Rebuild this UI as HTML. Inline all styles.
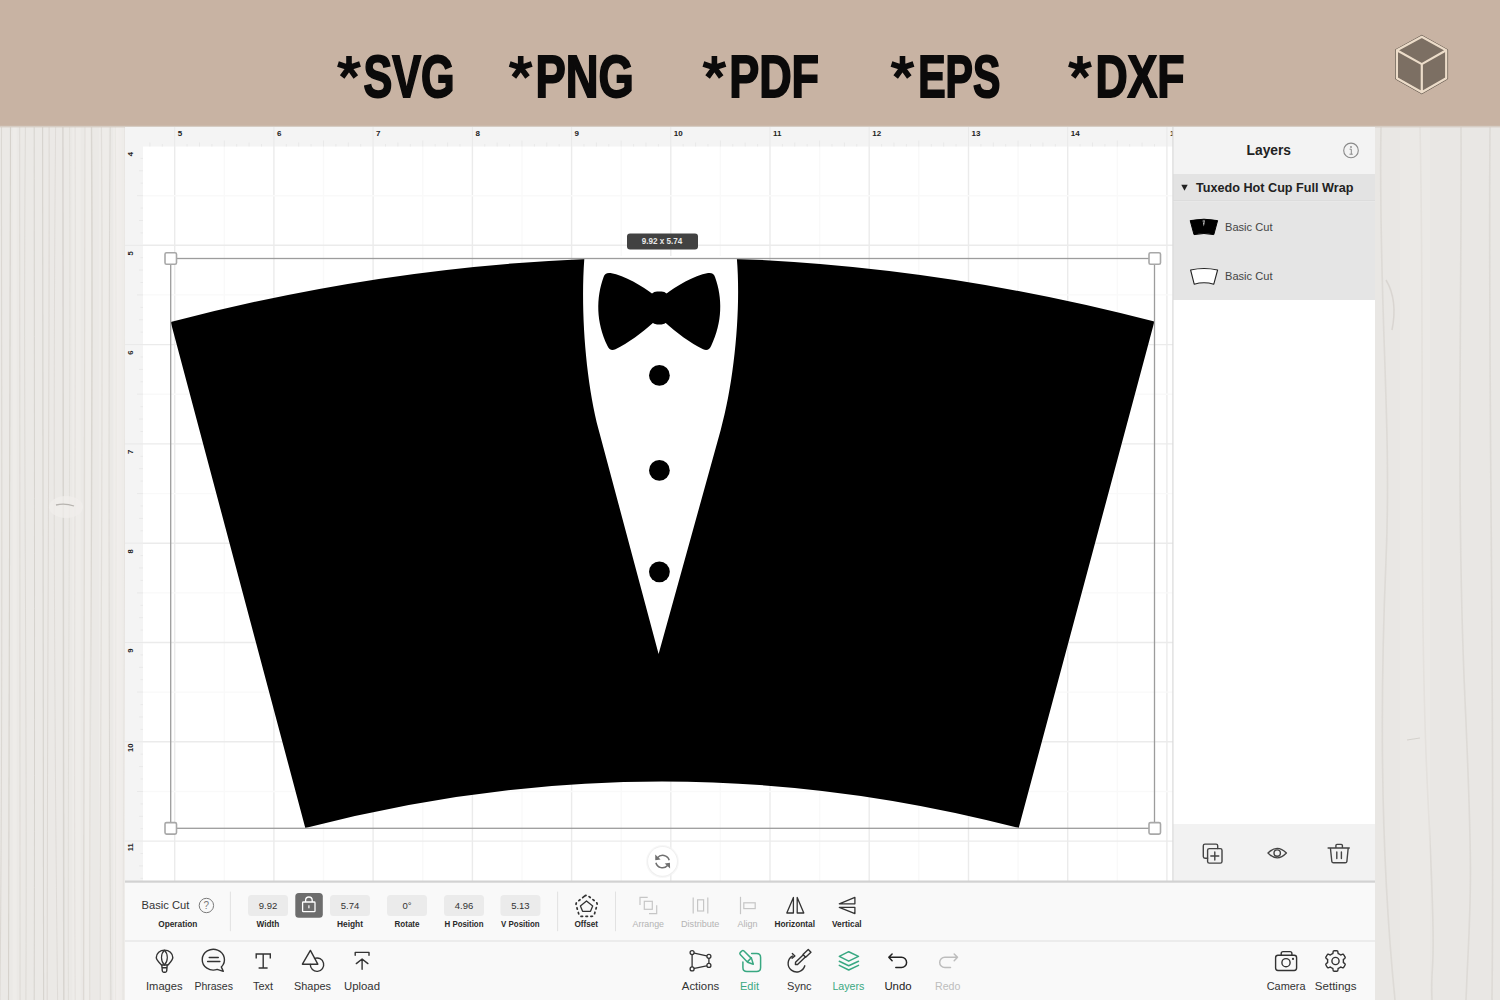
<!DOCTYPE html>
<html><head><meta charset="utf-8">
<style>
html,body{margin:0;padding:0;width:1500px;height:1000px;overflow:hidden;}
body{position:relative;background:#e4e1dd;font-family:"Liberation Sans",sans-serif;}
svg{position:absolute;left:0;top:0;}
</style></head>
<body>
<svg width="1500" height="1000" viewBox="0 0 1500 1000">
<rect x="0" y="127" width="125.5" height="873" fill="#ebe9e6"/>
<rect x="1375" y="127" width="125" height="873" fill="#e9e7e4"/>
<path d="M1.5 127 C1.3 400 3.3 700 -0.1 1000" stroke="#d4d0ca" stroke-width="1.06" opacity="0.70" fill="none"/>
<path d="M10.5 127 C8.5 400 9.5 700 8.5 1000" stroke="#cdc9c3" stroke-width="1.08" opacity="0.73" fill="none"/>
<path d="M19.6 127 C21.9 400 20.3 700 20.1 1000" stroke="#d4d0ca" stroke-width="1.25" opacity="0.47" fill="none"/>
<path d="M25.4 127 C23.0 400 27.3 700 25.9 1000" stroke="#cdc9c3" stroke-width="0.71" opacity="0.69" fill="none"/>
<path d="M34.2 127 C34.3 400 34.9 700 34.2 1000" stroke="#cdc9c3" stroke-width="0.96" opacity="0.72" fill="none"/>
<path d="M42.6 127 C45.0 400 44.3 700 43.6 1000" stroke="#c6c2bc" stroke-width="1.07" opacity="0.58" fill="none"/>
<path d="M49.1 127 C49.5 400 47.2 700 47.2 1000" stroke="#cdc9c3" stroke-width="0.88" opacity="0.58" fill="none"/>
<path d="M55.6 127 C53.1 400 54.1 700 57.6 1000" stroke="#c6c2bc" stroke-width="0.75" opacity="0.46" fill="none"/>
<path d="M62.9 127 C63.3 400 61.4 700 63.8 1000" stroke="#cdc9c3" stroke-width="1.48" opacity="0.63" fill="none"/>
<path d="M69.6 127 C70.9 400 67.7 700 68.4 1000" stroke="#d4d0ca" stroke-width="0.95" opacity="0.46" fill="none"/>
<path d="M75.1 127 C76.0 400 73.6 700 75.2 1000" stroke="#cdc9c3" stroke-width="0.75" opacity="0.81" fill="none"/>
<path d="M85.1 127 C83.1 400 84.7 700 83.6 1000" stroke="#d4d0ca" stroke-width="1.32" opacity="0.64" fill="none"/>
<path d="M91.4 127 C93.9 400 89.0 700 89.8 1000" stroke="#d4d0ca" stroke-width="1.48" opacity="0.81" fill="none"/>
<path d="M101.4 127 C103.8 400 99.9 700 100.2 1000" stroke="#cdc9c3" stroke-width="1.18" opacity="0.71" fill="none"/>
<path d="M110.2 127 C108.1 400 108.8 700 110.9 1000" stroke="#cdc9c3" stroke-width="0.96" opacity="0.58" fill="none"/>
<path d="M115.3 127 C117.6 400 115.2 700 115.7 1000" stroke="#cdc9c3" stroke-width="0.99" opacity="0.73" fill="none"/>
<path d="M124.7 127 C126.2 400 123.4 700 123.1 1000" stroke="#cdc9c3" stroke-width="0.85" opacity="0.52" fill="none"/>
<rect x="112.8" y="127" width="6.0" height="873" fill="#f3f1ee" opacity="0.4"/>
<rect x="114.0" y="127" width="12.8" height="873" fill="#f3f1ee" opacity="0.4"/>
<rect x="72.4" y="127" width="8.2" height="873" fill="#f3f1ee" opacity="0.4"/>
<rect x="12.5" y="127" width="4.4" height="873" fill="#f3f1ee" opacity="0.4"/>
<rect x="115.5" y="127" width="6.4" height="873" fill="#f3f1ee" opacity="0.4"/>
<rect x="84.5" y="127" width="6.6" height="873" fill="#f3f1ee" opacity="0.4"/>
<rect x="98.8" y="127" width="10.0" height="873" fill="#f3f1ee" opacity="0.4"/>
<ellipse cx="66" cy="507" rx="17" ry="11" fill="#f0eeeb" opacity="0.75"/><path d="M56 505 Q65 503 74 506" stroke="#a9a5a0" stroke-width="1.3" fill="none" opacity="0.8"/>
<path d="M1381 127 C1378 300 1392 420 1386 560 S1380 850 1395 1000" stroke="#d4d0ca" stroke-width="1.6" opacity="0.55" fill="none"/>
<path d="M1461 127 C1462 300 1456 500 1465 700 S1470 900 1466 1000" stroke="#d4d0ca" stroke-width="1.6" opacity="0.55" fill="none"/>
<path d="M1420 127 C1425 350 1418 600 1428 800 S1430 950 1432 1000" stroke="#d4d0ca" stroke-width="1.6" opacity="0.55" fill="none"/>
<path d="M1490 127 C1488 400 1495 700 1492 1000" stroke="#d4d0ca" stroke-width="1.6" opacity="0.55" fill="none"/>
<path d="M1386 280 Q1398 300 1392 330" stroke="#cfcac4" stroke-width="1.5" opacity="0.6" fill="none"/>
<path d="M1407 740 L1420 738" stroke="#b8b3ad" stroke-width="1.2" opacity="0.7" fill="none"/>
<rect x="1400" y="127" width="30" height="873" fill="#f1efec" opacity="0.35"/>

<rect x="0" y="0" width="1500" height="126" fill="#c8b3a3"/><rect x="0" y="125.8" width="1500" height="1.6" fill="#d6cdc4"/>
<text transform="translate(363.41,96.50) scale(0.7364,1)" x="0" y="0" font-family="Liberation Sans" font-weight="bold" font-size="58.55" fill="#0b0a0a" stroke="#0b0a0a" stroke-width="1.90" stroke-linejoin="miter">SVG</text>
<text transform="translate(535.52,96.50) scale(0.7753,1)" x="0" y="0" font-family="Liberation Sans" font-weight="bold" font-size="58.55" fill="#0b0a0a" stroke="#0b0a0a" stroke-width="1.81" stroke-linejoin="miter">PNG</text>
<text transform="translate(729.15,96.50) scale(0.7681,1)" x="0" y="0" font-family="Liberation Sans" font-weight="bold" font-size="58.55" fill="#0b0a0a" stroke="#0b0a0a" stroke-width="1.82" stroke-linejoin="miter">PDF</text>
<text transform="translate(918.23,96.50) scale(0.7003,1)" x="0" y="0" font-family="Liberation Sans" font-weight="bold" font-size="58.55" fill="#0b0a0a" stroke="#0b0a0a" stroke-width="2.00" stroke-linejoin="miter">EPS</text>
<text transform="translate(1095.38,96.50) scale(0.7618,1)" x="0" y="0" font-family="Liberation Sans" font-weight="bold" font-size="58.55" fill="#0b0a0a" stroke="#0b0a0a" stroke-width="1.84" stroke-linejoin="miter">DXF</text>
<path d="M349.00 67.60 L349.00 56.00 M349.00 67.60 L360.03 64.02 M349.00 67.60 L337.97 64.02 M349.00 67.60 L355.82 76.98 M349.00 67.60 L342.18 76.98 " stroke="#0b0a0a" stroke-width="5.6" stroke-linecap="butt" fill="none"/>
<path d="M520.70 67.60 L520.70 56.00 M520.70 67.60 L531.73 64.02 M520.70 67.60 L509.67 64.02 M520.70 67.60 L527.52 76.98 M520.70 67.60 L513.88 76.98 " stroke="#0b0a0a" stroke-width="5.6" stroke-linecap="butt" fill="none"/>
<path d="M714.40 67.60 L714.40 56.00 M714.40 67.60 L725.43 64.02 M714.40 67.60 L703.37 64.02 M714.40 67.60 L721.22 76.98 M714.40 67.60 L707.58 76.98 " stroke="#0b0a0a" stroke-width="5.6" stroke-linecap="butt" fill="none"/>
<path d="M902.50 67.60 L902.50 56.00 M902.50 67.60 L913.53 64.02 M902.50 67.60 L891.47 64.02 M902.50 67.60 L909.32 76.98 M902.50 67.60 L895.68 76.98 " stroke="#0b0a0a" stroke-width="5.6" stroke-linecap="butt" fill="none"/>
<path d="M1080.00 67.60 L1080.00 56.00 M1080.00 67.60 L1091.03 64.02 M1080.00 67.60 L1068.97 64.02 M1080.00 67.60 L1086.82 76.98 M1080.00 67.60 L1073.18 76.98 " stroke="#0b0a0a" stroke-width="5.6" stroke-linecap="butt" fill="none"/>
<g stroke-linejoin="round">
<path d="M1421.8 35.3 L1447.6 49.7 L1447.6 79 L1421.8 93.8 L1395.5 79 L1395.5 49.7 Z" fill="#7c6f63" stroke="#6e6257" stroke-width="1"/>
<path d="M1421.8 36.8 L1446.2 50.3 L1446.2 78.3 L1421.8 92.3 L1396.9 78.3 L1396.9 50.3 Z M1396.9 50.3 L1421.8 64.1 L1446.2 50.3 M1421.8 64.1 L1421.8 92.3" fill="none" stroke="#ecdcc9" stroke-width="2.2"/>
</g>

<svg x="125" y="127" width="1048" height="754" viewBox="125 127 1048 754">
<rect x="125" y="127" width="1048" height="754" fill="#fff"/>
<g><line x1="174.7" y1="146" x2="174.7" y2="881" stroke="#ebebeb" stroke-width="1.4"/><line x1="224.3" y1="146" x2="224.3" y2="881" stroke="#f9f9f9" stroke-width="1.4"/><line x1="273.9" y1="146" x2="273.9" y2="881" stroke="#ebebeb" stroke-width="1.4"/><line x1="323.5" y1="146" x2="323.5" y2="881" stroke="#f9f9f9" stroke-width="1.4"/><line x1="373.1" y1="146" x2="373.1" y2="881" stroke="#ebebeb" stroke-width="1.4"/><line x1="422.8" y1="146" x2="422.8" y2="881" stroke="#f9f9f9" stroke-width="1.4"/><line x1="472.4" y1="146" x2="472.4" y2="881" stroke="#ebebeb" stroke-width="1.4"/><line x1="522.0" y1="146" x2="522.0" y2="881" stroke="#f9f9f9" stroke-width="1.4"/><line x1="571.6" y1="146" x2="571.6" y2="881" stroke="#ebebeb" stroke-width="1.4"/><line x1="621.2" y1="146" x2="621.2" y2="881" stroke="#f9f9f9" stroke-width="1.4"/><line x1="670.8" y1="146" x2="670.8" y2="881" stroke="#ebebeb" stroke-width="1.4"/><line x1="720.4" y1="146" x2="720.4" y2="881" stroke="#f9f9f9" stroke-width="1.4"/><line x1="770.0" y1="146" x2="770.0" y2="881" stroke="#ebebeb" stroke-width="1.4"/><line x1="819.6" y1="146" x2="819.6" y2="881" stroke="#f9f9f9" stroke-width="1.4"/><line x1="869.2" y1="146" x2="869.2" y2="881" stroke="#ebebeb" stroke-width="1.4"/><line x1="918.8" y1="146" x2="918.8" y2="881" stroke="#f9f9f9" stroke-width="1.4"/><line x1="968.5" y1="146" x2="968.5" y2="881" stroke="#ebebeb" stroke-width="1.4"/><line x1="1018.1" y1="146" x2="1018.1" y2="881" stroke="#f9f9f9" stroke-width="1.4"/><line x1="1067.7" y1="146" x2="1067.7" y2="881" stroke="#ebebeb" stroke-width="1.4"/><line x1="1117.3" y1="146" x2="1117.3" y2="881" stroke="#f9f9f9" stroke-width="1.4"/><line x1="1166.9" y1="146" x2="1166.9" y2="881" stroke="#ebebeb" stroke-width="1.4"/><line x1="143" y1="195.7" x2="1173" y2="195.7" stroke="#f9f9f9" stroke-width="1.4"/><line x1="143" y1="245.3" x2="1173" y2="245.3" stroke="#ebebeb" stroke-width="1.4"/><line x1="143" y1="294.9" x2="1173" y2="294.9" stroke="#f9f9f9" stroke-width="1.4"/><line x1="143" y1="344.6" x2="1173" y2="344.6" stroke="#ebebeb" stroke-width="1.4"/><line x1="143" y1="394.2" x2="1173" y2="394.2" stroke="#f9f9f9" stroke-width="1.4"/><line x1="143" y1="443.9" x2="1173" y2="443.9" stroke="#ebebeb" stroke-width="1.4"/><line x1="143" y1="493.6" x2="1173" y2="493.6" stroke="#f9f9f9" stroke-width="1.4"/><line x1="143" y1="543.2" x2="1173" y2="543.2" stroke="#ebebeb" stroke-width="1.4"/><line x1="143" y1="592.9" x2="1173" y2="592.9" stroke="#f9f9f9" stroke-width="1.4"/><line x1="143" y1="642.5" x2="1173" y2="642.5" stroke="#ebebeb" stroke-width="1.4"/><line x1="143" y1="692.1" x2="1173" y2="692.1" stroke="#f9f9f9" stroke-width="1.4"/><line x1="143" y1="741.8" x2="1173" y2="741.8" stroke="#ebebeb" stroke-width="1.4"/><line x1="143" y1="791.5" x2="1173" y2="791.5" stroke="#f9f9f9" stroke-width="1.4"/><line x1="143" y1="841.1" x2="1173" y2="841.1" stroke="#ebebeb" stroke-width="1.4"/></g>
<g font-family="Liberation Sans"><rect x="125" y="127" width="1048" height="19.5" fill="#f4f4f4"/><rect x="125" y="127" width="18" height="754" fill="#f4f4f4"/><line x1="149.9" y1="142.5" x2="149.9" y2="146.5" stroke="#e9e9e9" stroke-width="1"/><line x1="162.3" y1="144.0" x2="162.3" y2="146.5" stroke="#e9e9e9" stroke-width="1"/><line x1="174.7" y1="127.0" x2="174.7" y2="146.5" stroke="#e9e9e9" stroke-width="1"/><line x1="187.1" y1="144.0" x2="187.1" y2="146.5" stroke="#e9e9e9" stroke-width="1"/><line x1="199.5" y1="142.5" x2="199.5" y2="146.5" stroke="#e9e9e9" stroke-width="1"/><line x1="211.9" y1="144.0" x2="211.9" y2="146.5" stroke="#e9e9e9" stroke-width="1"/><line x1="224.3" y1="140.5" x2="224.3" y2="146.5" stroke="#e9e9e9" stroke-width="1"/><line x1="236.7" y1="144.0" x2="236.7" y2="146.5" stroke="#e9e9e9" stroke-width="1"/><line x1="249.1" y1="142.5" x2="249.1" y2="146.5" stroke="#e9e9e9" stroke-width="1"/><line x1="261.5" y1="144.0" x2="261.5" y2="146.5" stroke="#e9e9e9" stroke-width="1"/><line x1="273.9" y1="127.0" x2="273.9" y2="146.5" stroke="#e9e9e9" stroke-width="1"/><line x1="286.3" y1="144.0" x2="286.3" y2="146.5" stroke="#e9e9e9" stroke-width="1"/><line x1="298.7" y1="142.5" x2="298.7" y2="146.5" stroke="#e9e9e9" stroke-width="1"/><line x1="311.1" y1="144.0" x2="311.1" y2="146.5" stroke="#e9e9e9" stroke-width="1"/><line x1="323.5" y1="140.5" x2="323.5" y2="146.5" stroke="#e9e9e9" stroke-width="1"/><line x1="335.9" y1="144.0" x2="335.9" y2="146.5" stroke="#e9e9e9" stroke-width="1"/><line x1="348.3" y1="142.5" x2="348.3" y2="146.5" stroke="#e9e9e9" stroke-width="1"/><line x1="360.7" y1="144.0" x2="360.7" y2="146.5" stroke="#e9e9e9" stroke-width="1"/><line x1="373.1" y1="127.0" x2="373.1" y2="146.5" stroke="#e9e9e9" stroke-width="1"/><line x1="385.5" y1="144.0" x2="385.5" y2="146.5" stroke="#e9e9e9" stroke-width="1"/><line x1="397.9" y1="142.5" x2="397.9" y2="146.5" stroke="#e9e9e9" stroke-width="1"/><line x1="410.3" y1="144.0" x2="410.3" y2="146.5" stroke="#e9e9e9" stroke-width="1"/><line x1="422.8" y1="140.5" x2="422.8" y2="146.5" stroke="#e9e9e9" stroke-width="1"/><line x1="435.2" y1="144.0" x2="435.2" y2="146.5" stroke="#e9e9e9" stroke-width="1"/><line x1="447.6" y1="142.5" x2="447.6" y2="146.5" stroke="#e9e9e9" stroke-width="1"/><line x1="460.0" y1="144.0" x2="460.0" y2="146.5" stroke="#e9e9e9" stroke-width="1"/><line x1="472.4" y1="127.0" x2="472.4" y2="146.5" stroke="#e9e9e9" stroke-width="1"/><line x1="484.8" y1="144.0" x2="484.8" y2="146.5" stroke="#e9e9e9" stroke-width="1"/><line x1="497.2" y1="142.5" x2="497.2" y2="146.5" stroke="#e9e9e9" stroke-width="1"/><line x1="509.6" y1="144.0" x2="509.6" y2="146.5" stroke="#e9e9e9" stroke-width="1"/><line x1="522.0" y1="140.5" x2="522.0" y2="146.5" stroke="#e9e9e9" stroke-width="1"/><line x1="534.4" y1="144.0" x2="534.4" y2="146.5" stroke="#e9e9e9" stroke-width="1"/><line x1="546.8" y1="142.5" x2="546.8" y2="146.5" stroke="#e9e9e9" stroke-width="1"/><line x1="559.2" y1="144.0" x2="559.2" y2="146.5" stroke="#e9e9e9" stroke-width="1"/><line x1="571.6" y1="127.0" x2="571.6" y2="146.5" stroke="#e9e9e9" stroke-width="1"/><line x1="584.0" y1="144.0" x2="584.0" y2="146.5" stroke="#e9e9e9" stroke-width="1"/><line x1="596.4" y1="142.5" x2="596.4" y2="146.5" stroke="#e9e9e9" stroke-width="1"/><line x1="608.8" y1="144.0" x2="608.8" y2="146.5" stroke="#e9e9e9" stroke-width="1"/><line x1="621.2" y1="140.5" x2="621.2" y2="146.5" stroke="#e9e9e9" stroke-width="1"/><line x1="633.6" y1="144.0" x2="633.6" y2="146.5" stroke="#e9e9e9" stroke-width="1"/><line x1="646.0" y1="142.5" x2="646.0" y2="146.5" stroke="#e9e9e9" stroke-width="1"/><line x1="658.4" y1="144.0" x2="658.4" y2="146.5" stroke="#e9e9e9" stroke-width="1"/><line x1="670.8" y1="127.0" x2="670.8" y2="146.5" stroke="#e9e9e9" stroke-width="1"/><line x1="683.2" y1="144.0" x2="683.2" y2="146.5" stroke="#e9e9e9" stroke-width="1"/><line x1="695.6" y1="142.5" x2="695.6" y2="146.5" stroke="#e9e9e9" stroke-width="1"/><line x1="708.0" y1="144.0" x2="708.0" y2="146.5" stroke="#e9e9e9" stroke-width="1"/><line x1="720.4" y1="140.5" x2="720.4" y2="146.5" stroke="#e9e9e9" stroke-width="1"/><line x1="732.8" y1="144.0" x2="732.8" y2="146.5" stroke="#e9e9e9" stroke-width="1"/><line x1="745.2" y1="142.5" x2="745.2" y2="146.5" stroke="#e9e9e9" stroke-width="1"/><line x1="757.6" y1="144.0" x2="757.6" y2="146.5" stroke="#e9e9e9" stroke-width="1"/><line x1="770.0" y1="127.0" x2="770.0" y2="146.5" stroke="#e9e9e9" stroke-width="1"/><line x1="782.4" y1="144.0" x2="782.4" y2="146.5" stroke="#e9e9e9" stroke-width="1"/><line x1="794.8" y1="142.5" x2="794.8" y2="146.5" stroke="#e9e9e9" stroke-width="1"/><line x1="807.2" y1="144.0" x2="807.2" y2="146.5" stroke="#e9e9e9" stroke-width="1"/><line x1="819.6" y1="140.5" x2="819.6" y2="146.5" stroke="#e9e9e9" stroke-width="1"/><line x1="832.0" y1="144.0" x2="832.0" y2="146.5" stroke="#e9e9e9" stroke-width="1"/><line x1="844.4" y1="142.5" x2="844.4" y2="146.5" stroke="#e9e9e9" stroke-width="1"/><line x1="856.8" y1="144.0" x2="856.8" y2="146.5" stroke="#e9e9e9" stroke-width="1"/><line x1="869.2" y1="127.0" x2="869.2" y2="146.5" stroke="#e9e9e9" stroke-width="1"/><line x1="881.6" y1="144.0" x2="881.6" y2="146.5" stroke="#e9e9e9" stroke-width="1"/><line x1="894.0" y1="142.5" x2="894.0" y2="146.5" stroke="#e9e9e9" stroke-width="1"/><line x1="906.4" y1="144.0" x2="906.4" y2="146.5" stroke="#e9e9e9" stroke-width="1"/><line x1="918.8" y1="140.5" x2="918.8" y2="146.5" stroke="#e9e9e9" stroke-width="1"/><line x1="931.3" y1="144.0" x2="931.3" y2="146.5" stroke="#e9e9e9" stroke-width="1"/><line x1="943.7" y1="142.5" x2="943.7" y2="146.5" stroke="#e9e9e9" stroke-width="1"/><line x1="956.1" y1="144.0" x2="956.1" y2="146.5" stroke="#e9e9e9" stroke-width="1"/><line x1="968.5" y1="127.0" x2="968.5" y2="146.5" stroke="#e9e9e9" stroke-width="1"/><line x1="980.9" y1="144.0" x2="980.9" y2="146.5" stroke="#e9e9e9" stroke-width="1"/><line x1="993.3" y1="142.5" x2="993.3" y2="146.5" stroke="#e9e9e9" stroke-width="1"/><line x1="1005.7" y1="144.0" x2="1005.7" y2="146.5" stroke="#e9e9e9" stroke-width="1"/><line x1="1018.1" y1="140.5" x2="1018.1" y2="146.5" stroke="#e9e9e9" stroke-width="1"/><line x1="1030.5" y1="144.0" x2="1030.5" y2="146.5" stroke="#e9e9e9" stroke-width="1"/><line x1="1042.9" y1="142.5" x2="1042.9" y2="146.5" stroke="#e9e9e9" stroke-width="1"/><line x1="1055.3" y1="144.0" x2="1055.3" y2="146.5" stroke="#e9e9e9" stroke-width="1"/><line x1="1067.7" y1="127.0" x2="1067.7" y2="146.5" stroke="#e9e9e9" stroke-width="1"/><line x1="1080.1" y1="144.0" x2="1080.1" y2="146.5" stroke="#e9e9e9" stroke-width="1"/><line x1="1092.5" y1="142.5" x2="1092.5" y2="146.5" stroke="#e9e9e9" stroke-width="1"/><line x1="1104.9" y1="144.0" x2="1104.9" y2="146.5" stroke="#e9e9e9" stroke-width="1"/><line x1="1117.3" y1="140.5" x2="1117.3" y2="146.5" stroke="#e9e9e9" stroke-width="1"/><line x1="1129.7" y1="144.0" x2="1129.7" y2="146.5" stroke="#e9e9e9" stroke-width="1"/><line x1="1142.1" y1="142.5" x2="1142.1" y2="146.5" stroke="#e9e9e9" stroke-width="1"/><line x1="1154.5" y1="144.0" x2="1154.5" y2="146.5" stroke="#e9e9e9" stroke-width="1"/><line x1="1166.9" y1="127.0" x2="1166.9" y2="146.5" stroke="#e9e9e9" stroke-width="1"/><line x1="140.5" y1="158.4" x2="143" y2="158.4" stroke="#e9e9e9" stroke-width="1"/><line x1="139.0" y1="170.8" x2="143" y2="170.8" stroke="#e9e9e9" stroke-width="1"/><line x1="140.5" y1="183.2" x2="143" y2="183.2" stroke="#e9e9e9" stroke-width="1"/><line x1="137.0" y1="195.7" x2="143" y2="195.7" stroke="#e9e9e9" stroke-width="1"/><line x1="140.5" y1="208.1" x2="143" y2="208.1" stroke="#e9e9e9" stroke-width="1"/><line x1="139.0" y1="220.5" x2="143" y2="220.5" stroke="#e9e9e9" stroke-width="1"/><line x1="140.5" y1="232.9" x2="143" y2="232.9" stroke="#e9e9e9" stroke-width="1"/><line x1="123.5" y1="245.3" x2="143" y2="245.3" stroke="#e9e9e9" stroke-width="1"/><line x1="140.5" y1="257.7" x2="143" y2="257.7" stroke="#e9e9e9" stroke-width="1"/><line x1="139.0" y1="270.1" x2="143" y2="270.1" stroke="#e9e9e9" stroke-width="1"/><line x1="140.5" y1="282.5" x2="143" y2="282.5" stroke="#e9e9e9" stroke-width="1"/><line x1="137.0" y1="294.9" x2="143" y2="294.9" stroke="#e9e9e9" stroke-width="1"/><line x1="140.5" y1="307.4" x2="143" y2="307.4" stroke="#e9e9e9" stroke-width="1"/><line x1="139.0" y1="319.8" x2="143" y2="319.8" stroke="#e9e9e9" stroke-width="1"/><line x1="140.5" y1="332.2" x2="143" y2="332.2" stroke="#e9e9e9" stroke-width="1"/><line x1="123.5" y1="344.6" x2="143" y2="344.6" stroke="#e9e9e9" stroke-width="1"/><line x1="140.5" y1="357.0" x2="143" y2="357.0" stroke="#e9e9e9" stroke-width="1"/><line x1="139.0" y1="369.4" x2="143" y2="369.4" stroke="#e9e9e9" stroke-width="1"/><line x1="140.5" y1="381.8" x2="143" y2="381.8" stroke="#e9e9e9" stroke-width="1"/><line x1="137.0" y1="394.2" x2="143" y2="394.2" stroke="#e9e9e9" stroke-width="1"/><line x1="140.5" y1="406.7" x2="143" y2="406.7" stroke="#e9e9e9" stroke-width="1"/><line x1="139.0" y1="419.1" x2="143" y2="419.1" stroke="#e9e9e9" stroke-width="1"/><line x1="140.5" y1="431.5" x2="143" y2="431.5" stroke="#e9e9e9" stroke-width="1"/><line x1="123.5" y1="443.9" x2="143" y2="443.9" stroke="#e9e9e9" stroke-width="1"/><line x1="140.5" y1="456.3" x2="143" y2="456.3" stroke="#e9e9e9" stroke-width="1"/><line x1="139.0" y1="468.7" x2="143" y2="468.7" stroke="#e9e9e9" stroke-width="1"/><line x1="140.5" y1="481.1" x2="143" y2="481.1" stroke="#e9e9e9" stroke-width="1"/><line x1="137.0" y1="493.6" x2="143" y2="493.6" stroke="#e9e9e9" stroke-width="1"/><line x1="140.5" y1="506.0" x2="143" y2="506.0" stroke="#e9e9e9" stroke-width="1"/><line x1="139.0" y1="518.4" x2="143" y2="518.4" stroke="#e9e9e9" stroke-width="1"/><line x1="140.5" y1="530.8" x2="143" y2="530.8" stroke="#e9e9e9" stroke-width="1"/><line x1="123.5" y1="543.2" x2="143" y2="543.2" stroke="#e9e9e9" stroke-width="1"/><line x1="140.5" y1="555.6" x2="143" y2="555.6" stroke="#e9e9e9" stroke-width="1"/><line x1="139.0" y1="568.0" x2="143" y2="568.0" stroke="#e9e9e9" stroke-width="1"/><line x1="140.5" y1="580.4" x2="143" y2="580.4" stroke="#e9e9e9" stroke-width="1"/><line x1="137.0" y1="592.9" x2="143" y2="592.9" stroke="#e9e9e9" stroke-width="1"/><line x1="140.5" y1="605.3" x2="143" y2="605.3" stroke="#e9e9e9" stroke-width="1"/><line x1="139.0" y1="617.7" x2="143" y2="617.7" stroke="#e9e9e9" stroke-width="1"/><line x1="140.5" y1="630.1" x2="143" y2="630.1" stroke="#e9e9e9" stroke-width="1"/><line x1="123.5" y1="642.5" x2="143" y2="642.5" stroke="#e9e9e9" stroke-width="1"/><line x1="140.5" y1="654.9" x2="143" y2="654.9" stroke="#e9e9e9" stroke-width="1"/><line x1="139.0" y1="667.3" x2="143" y2="667.3" stroke="#e9e9e9" stroke-width="1"/><line x1="140.5" y1="679.7" x2="143" y2="679.7" stroke="#e9e9e9" stroke-width="1"/><line x1="137.0" y1="692.1" x2="143" y2="692.1" stroke="#e9e9e9" stroke-width="1"/><line x1="140.5" y1="704.6" x2="143" y2="704.6" stroke="#e9e9e9" stroke-width="1"/><line x1="139.0" y1="717.0" x2="143" y2="717.0" stroke="#e9e9e9" stroke-width="1"/><line x1="140.5" y1="729.4" x2="143" y2="729.4" stroke="#e9e9e9" stroke-width="1"/><line x1="123.5" y1="741.8" x2="143" y2="741.8" stroke="#e9e9e9" stroke-width="1"/><line x1="140.5" y1="754.2" x2="143" y2="754.2" stroke="#e9e9e9" stroke-width="1"/><line x1="139.0" y1="766.6" x2="143" y2="766.6" stroke="#e9e9e9" stroke-width="1"/><line x1="140.5" y1="779.0" x2="143" y2="779.0" stroke="#e9e9e9" stroke-width="1"/><line x1="137.0" y1="791.5" x2="143" y2="791.5" stroke="#e9e9e9" stroke-width="1"/><line x1="140.5" y1="803.9" x2="143" y2="803.9" stroke="#e9e9e9" stroke-width="1"/><line x1="139.0" y1="816.3" x2="143" y2="816.3" stroke="#e9e9e9" stroke-width="1"/><line x1="140.5" y1="828.7" x2="143" y2="828.7" stroke="#e9e9e9" stroke-width="1"/><line x1="123.5" y1="841.1" x2="143" y2="841.1" stroke="#e9e9e9" stroke-width="1"/><line x1="140.5" y1="853.5" x2="143" y2="853.5" stroke="#e9e9e9" stroke-width="1"/><line x1="139.0" y1="865.9" x2="143" y2="865.9" stroke="#e9e9e9" stroke-width="1"/><line x1="140.5" y1="878.3" x2="143" y2="878.3" stroke="#e9e9e9" stroke-width="1"/><text x="177.7" y="136.3" font-size="8" font-weight="bold" fill="#222">5</text><text x="276.9" y="136.3" font-size="8" font-weight="bold" fill="#222">6</text><text x="376.1" y="136.3" font-size="8" font-weight="bold" fill="#222">7</text><text x="475.4" y="136.3" font-size="8" font-weight="bold" fill="#222">8</text><text x="574.6" y="136.3" font-size="8" font-weight="bold" fill="#222">9</text><text x="673.8" y="136.3" font-size="8" font-weight="bold" fill="#222">10</text><text x="773.0" y="136.3" font-size="8" font-weight="bold" fill="#222">11</text><text x="872.2" y="136.3" font-size="8" font-weight="bold" fill="#222">12</text><text x="971.5" y="136.3" font-size="8" font-weight="bold" fill="#222">13</text><text x="1070.7" y="136.3" font-size="8" font-weight="bold" fill="#222">14</text><text x="1169.9" y="136.3" font-size="8" font-weight="bold" fill="#222">15</text><text transform="translate(133.3,156.2) rotate(-90)" font-size="7.6" font-weight="bold" fill="#222" x="0" y="0">4</text><text transform="translate(133.3,255.5) rotate(-90)" font-size="7.6" font-weight="bold" fill="#222" x="0" y="0">5</text><text transform="translate(133.3,354.8) rotate(-90)" font-size="7.6" font-weight="bold" fill="#222" x="0" y="0">6</text><text transform="translate(133.3,454.1) rotate(-90)" font-size="7.6" font-weight="bold" fill="#222" x="0" y="0">7</text><text transform="translate(133.3,553.4) rotate(-90)" font-size="7.6" font-weight="bold" fill="#222" x="0" y="0">8</text><text transform="translate(133.3,652.7) rotate(-90)" font-size="7.6" font-weight="bold" fill="#222" x="0" y="0">9</text><text transform="translate(133.3,752.0) rotate(-90)" font-size="7.6" font-weight="bold" fill="#222" x="0" y="0">10</text><text transform="translate(133.3,851.3) rotate(-90)" font-size="7.6" font-weight="bold" fill="#222" x="0" y="0">11</text></g>
<path d="M170.7 322 Q662.5 193 1154.4 321.6 L1018.7 828 Q662 735 305.3 828 Z" fill="#000"/>
<path d="M584.3 256 L584.3 259 C580.5 310 585.5 380 598.7 430 L658.6 654 L720.7 430 C734.5 380 741 310 736.9 259 L736.9 256 Z" fill="#fff"/>
<g fill="#000">
<path d="M654 295 C642 286 625 275.5 610.5 273 Q605 272.2 603.6 277 C596 298 596 322 607.5 346 Q610 351.5 615.5 349.2 C628 343 642 333 654 322 Z"/>
<path d="M 664.6 295.0 C 676.6 286.0 693.6 275.5 708.1 273.0 Q 713.6 272.2 715.0 277.0 C 722.6 298.0 722.6 322.0 711.1 346.0 Q 708.6 351.5 703.1 349.2 C 690.6 343.0 676.6 333.0 664.6 322.0 Z"/>
<rect x="649.6" y="291.6" width="19.4" height="32.8" rx="7.5" ry="7"/>
<circle cx="659.4" cy="375.4" r="10.4"/>
<circle cx="659.4" cy="470.4" r="10.4"/>
<circle cx="659.4" cy="571.8" r="10.4"/>
</g>
<rect x="170.7" y="258.5" width="983.8" height="569.8" fill="none" stroke="#9c9c9c" stroke-width="1.3"/>
<g fill="#fff" stroke="#a8a8a8" stroke-width="1.6">
<rect x="165" y="252.8" width="11.5" height="11.5" rx="1.5"/>
<rect x="1149" y="252.8" width="11.5" height="11.5" rx="1.5"/>
<rect x="165" y="822.6" width="11.5" height="11.5" rx="1.5"/>
<rect x="1149" y="822.6" width="11.5" height="11.5" rx="1.5"/>
</g>
<rect x="627" y="233.6" width="71" height="16" rx="3" fill="#424242"/>
<text x="662" y="244.1" font-family="Liberation Sans" font-size="8.4" font-weight="bold" fill="#e8e8e8" text-anchor="middle" textLength="40.5" lengthAdjust="spacingAndGlyphs">9.92 x 5.74</text>
<circle cx="662.5" cy="861.6" r="16.5" fill="#f3f3f3" opacity="0.7"/>
<circle cx="662.5" cy="861.5" r="15.3" fill="#ececec" opacity="0.8"/>
<circle cx="662.5" cy="861.4" r="14.4" fill="#fff"/>
<g fill="none" stroke="#707070" stroke-width="1.5" stroke-linecap="butt">
<path d="M669.2 860.2 A6.8 6.8 0 0 0 657.4 857.9"/>
<path d="M655.9 862.8 A6.8 6.8 0 0 0 667.5 865.6"/>
</g>
<g fill="#707070">
<path d="M655.2 854.6 L655.3 860.2 L660.6 859.4 Z"/>
<path d="M670.1 868.4 L669.9 862.8 L664.7 863.6 Z"/>
</g>

</svg>
<rect x="1173" y="127" width="202" height="754" fill="#fff"/>
<rect x="1173" y="127" width="202" height="47" fill="#f3f3f3"/>
<rect x="1173" y="174" width="202" height="27" fill="#e3e3e3"/>
<rect x="1173" y="200.5" width="202" height="1" fill="#d6d6d6"/>
<rect x="1173" y="201.5" width="202" height="98.5" fill="#e5e5e5"/>
<rect x="1173" y="824" width="202" height="57" fill="#f2f2f2"/>
<rect x="1172.3" y="127" width="1.2" height="754" fill="#dadada"/>
<text x="1268.8" y="155.2" font-family="Liberation Sans" font-size="14" font-weight="bold" fill="#222" text-anchor="middle" textLength="44.5" lengthAdjust="spacingAndGlyphs">Layers</text>
<circle cx="1351" cy="150.4" r="7.3" fill="none" stroke="#8a8a8a" stroke-width="1.1"/>
<circle cx="1351" cy="147" r="0.9" fill="#8a8a8a"/><path d="M1349.6 149.2 H1351.3 V154.2 M1349.5 154.2 H1352.8" fill="none" stroke="#8a8a8a" stroke-width="1"/>
<path d="M1181.3 184.8 L1187.7 184.8 L1184.5 190.7 Z" fill="#222"/>
<text x="1196" y="192" font-family="Liberation Sans" font-size="13" font-weight="bold" fill="#222" textLength="157.4" lengthAdjust="spacingAndGlyphs">Tuxedo Hot Cup Full Wrap</text>
<path d="M1190.2 220.6 Q1204 217.8 1217.6 220.6 L1213.8 234.6 Q1204 232.4 1194 234.6 Z" fill="#000" stroke="#000" stroke-width="1" stroke-linejoin="round"/>
<path d="M1202.6 220.4 L1205 220.4 L1203.8 226.5 Z" fill="#ddd"/><circle cx="1203.8" cy="222" r="0.8" fill="#222"/>
<path d="M1190.6 270 Q1204 267 1217.6 270 L1213.8 284.2 Q1204 281.4 1194.2 284.2 Z" fill="#fff" stroke="#222" stroke-width="1.1" stroke-linejoin="round"/>
<text x="1225" y="230.5" font-family="Liberation Sans" font-size="11.5" fill="#444" textLength="47.5" lengthAdjust="spacingAndGlyphs">Basic Cut</text>
<text x="1225" y="279.8" font-family="Liberation Sans" font-size="11.5" fill="#444" textLength="47.5" lengthAdjust="spacingAndGlyphs">Basic Cut</text>
<g fill="none" stroke="#444" stroke-width="1.4" stroke-linejoin="round" stroke-linecap="round"><path d="M1207.6 858.2 H1205 Q1203.3 858.2 1203.3 856.5 V845.8 Q1203.3 844.1 1205 844.1 H1216 Q1217.7 844.1 1217.7 845.8 V848.6"/><rect x="1207.6" y="848.6" width="14.4" height="14.5" rx="1.7"/><path d="M1214.8 852 V860 M1210.8 856 H1218.8"/></g>
<g fill="none" stroke="#444" stroke-width="1.4" stroke-linejoin="round" stroke-linecap="round"><path d="M1268 853.1 Q1277.2 843.6 1286.4 853.1 Q1277.2 862.6 1268 853.1 Z"/><circle cx="1277.2" cy="853.1" r="3.2"/></g>
<g fill="none" stroke="#444" stroke-width="1.4" stroke-linejoin="round" stroke-linecap="round"><path d="M1328.1 848 H1349.3 M1335.9 848 V845.5 Q1335.9 844.4 1337 844.4 H1341.3 Q1342.4 844.4 1342.4 845.5 V848 M1330.4 848 L1331.8 861.3 Q1332 862.8 1333.5 862.8 H1345.2 Q1346.7 862.8 1346.9 861.3 L1348.2 848 M1336.8 852 V858.6 M1341.4 852 V858.6"/></g>
<rect x="125" y="881" width="1250" height="119" fill="#f9f9f9"/>
<rect x="125" y="880.5" width="1250" height="2.2" fill="#d2d2d2"/>
<rect x="125" y="940.2" width="1250" height="1.6" fill="#e9e9e9"/>
<text x="141.6" y="908.7" font-family="Liberation Sans" font-size="11" fill="#333" textLength="47.7" lengthAdjust="spacingAndGlyphs">Basic Cut</text>
<circle cx="206.4" cy="905.5" r="7.2" fill="none" stroke="#7a7a7a" stroke-width="1"/>
<text x="206.4" y="909.3" font-family="Liberation Sans" font-size="10" fill="#7a7a7a" text-anchor="middle">?</text>
<rect x="229.9" y="891.6" width="1" height="39.6" fill="#e2e2e2"/>
<rect x="557.1" y="891.6" width="1" height="39.6" fill="#e2e2e2"/>
<rect x="615.0" y="891.6" width="1" height="39.6" fill="#e2e2e2"/>
<text x="177.8" y="927.4" font-family="Liberation Sans" font-size="9" font-weight="bold" fill="#2a2a2a" text-anchor="middle" textLength="39.2" lengthAdjust="spacingAndGlyphs">Operation</text>
<rect x="248" y="895" width="40" height="21" rx="3.5" fill="#ebebeb"/>
<text x="268" y="908.8" font-family="Liberation Sans" font-size="9.5" fill="#333" text-anchor="middle">9.92</text>
<text x="268" y="927.4" font-family="Liberation Sans" font-size="9" font-weight="bold" fill="#2a2a2a" text-anchor="middle" textLength="22.8" lengthAdjust="spacingAndGlyphs">Width</text>
<rect x="330" y="895" width="40" height="21" rx="3.5" fill="#ebebeb"/>
<text x="350" y="908.8" font-family="Liberation Sans" font-size="9.5" fill="#333" text-anchor="middle">5.74</text>
<text x="350" y="927.4" font-family="Liberation Sans" font-size="9" font-weight="bold" fill="#2a2a2a" text-anchor="middle" textLength="26" lengthAdjust="spacingAndGlyphs">Height</text>
<rect x="387" y="895" width="40" height="21" rx="3.5" fill="#ebebeb"/>
<text x="407" y="908.8" font-family="Liberation Sans" font-size="9.5" fill="#333" text-anchor="middle">0°</text>
<text x="407" y="927.4" font-family="Liberation Sans" font-size="9" font-weight="bold" fill="#2a2a2a" text-anchor="middle" textLength="25" lengthAdjust="spacingAndGlyphs">Rotate</text>
<rect x="444" y="895" width="40" height="21" rx="3.5" fill="#ebebeb"/>
<text x="464" y="908.8" font-family="Liberation Sans" font-size="9.5" fill="#333" text-anchor="middle">4.96</text>
<text x="464" y="927.4" font-family="Liberation Sans" font-size="9" font-weight="bold" fill="#2a2a2a" text-anchor="middle" textLength="39" lengthAdjust="spacingAndGlyphs">H Position</text>
<rect x="500.4" y="895" width="40" height="21" rx="3.5" fill="#ebebeb"/>
<text x="520.4" y="908.8" font-family="Liberation Sans" font-size="9.5" fill="#333" text-anchor="middle">5.13</text>
<text x="520.4" y="927.4" font-family="Liberation Sans" font-size="9" font-weight="bold" fill="#2a2a2a" text-anchor="middle" textLength="38.6" lengthAdjust="spacingAndGlyphs">V Position</text>
<rect x="295.3" y="893.1" width="27.5" height="24.6" rx="3.5" fill="#6d6d6d"/>
<g fill="none" stroke="#fff" stroke-width="1.3"><path d="M305.6 902 V900.3 A3.3 3.3 0 0 1 312.2 900.3 V902"/><rect x="302.6" y="902" width="12.4" height="9.7" rx="0.8"/></g><rect x="308.3" y="905.3" width="1.2" height="3" fill="#fff"/>
<g fill="none" stroke="#333" stroke-width="1.3" stroke-linejoin="round"><path d="M584.6 896.1 Q586.5 894.7 588.4 896.1 L595.9 901.9 Q597.6 903.2 597 905.3 L594.3 914.5 Q593.7 916.3 591.8 916.3 L581.4 916.3 Q579.5 916.3 578.9 914.5 L576.2 905.3 Q575.6 903.2 577.3 901.9 Z" stroke-dasharray="1.5 3.4" stroke-width="1.7" stroke-linecap="round"/><path d="M586.5 901 L592.7 905.9 L590.5 911.3 L582.6 911.3 L580.4 905.9 Z"/></g>
<text x="586.2" y="927.4" font-family="Liberation Sans" font-size="9" font-weight="bold" fill="#2a2a2a" text-anchor="middle" textLength="23.6" lengthAdjust="spacingAndGlyphs">Offset</text>
<g fill="none" stroke="#c6c6c6" stroke-width="1.2"><path d="M640 905 V897.3 H647.7 M656.7 905.3 V913.7 H649"/><rect x="644.3" y="901.3" width="8" height="8"/></g>
<text x="648.3" y="927.4" font-family="Liberation Sans" font-size="9"  fill="#b4b4b4" text-anchor="middle" textLength="31.4" lengthAdjust="spacingAndGlyphs">Arrange</text>
<g fill="none" stroke="#c6c6c6" stroke-width="1.2"><path d="M693.2 897.4 V913.6 M707.8 897.4 V913.6"/><rect x="697.6" y="899.8" width="6" height="11.2"/></g>
<text x="700.2" y="927.4" font-family="Liberation Sans" font-size="9"  fill="#b4b4b4" text-anchor="middle" textLength="38.4" lengthAdjust="spacingAndGlyphs">Distribute</text>
<g fill="none" stroke="#c6c6c6" stroke-width="1.2"><path d="M740.5 896.8 V914.2"/><rect x="743.8" y="902.8" width="11.4" height="5.8"/></g>
<text x="747.4" y="927.4" font-family="Liberation Sans" font-size="9"  fill="#b4b4b4" text-anchor="middle" textLength="20" lengthAdjust="spacingAndGlyphs">Align</text>
<g fill="none" stroke="#333" stroke-width="1.3" stroke-linejoin="round"><path d="M793.4 897.4 L786.8 913 H793.4 Z M797.2 897.4 L803.8 913 H797.2 Z"/></g>
<text x="794.8" y="927.4" font-family="Liberation Sans" font-size="9" font-weight="bold" fill="#2a2a2a" text-anchor="middle" textLength="40.4" lengthAdjust="spacingAndGlyphs">Horizontal</text>
<g fill="none" stroke="#333" stroke-width="1.3" stroke-linejoin="round"><path d="M854.9 897.4 L839.3 903.8 H854.9 Z M839.3 907.4 H854.9 V913.6 Z"/></g>
<text x="846.8" y="927.4" font-family="Liberation Sans" font-size="9" font-weight="bold" fill="#2a2a2a" text-anchor="middle" textLength="29.6" lengthAdjust="spacingAndGlyphs">Vertical</text>
<g fill="none" stroke="#333" stroke-width="1.4" stroke-linejoin="round" stroke-linecap="round"><path d="M161.5 965 C158 961.5 156.3 960 156.3 957.5 A8.25 7.4 0 0 1 172.8 957.5 C172.8 960 171 961.5 167.9 965 Z"/><path d="M164.4 950.3 C160.5 954 160.5 961 164.4 965 C168.3 961 168.3 954 164.4 950.3 Z" stroke-width="1.2"/><path d="M161.8 965 L162.3 971 Q162.5 972.2 163.7 972.2 H165.3 Q166.5 972.2 166.7 971 L167.2 965 M161.9 967.8 H167.1"/></g>
<text x="164.3" y="990" font-family="Liberation Sans" font-size="11" fill="#333" text-anchor="middle" textLength="36.6" lengthAdjust="spacingAndGlyphs">Images</text>
<g fill="none" stroke="#333" stroke-width="1.4" stroke-linejoin="round" stroke-linecap="round"><path d="M217.2 969.4 A11.1 10.4 0 1 1 221.3 966.9 L223.3 971.4 Z"/><path d="M209.2 957.5 H218.3 M207.6 961.5 H219.9"/></g>
<text x="213.7" y="990" font-family="Liberation Sans" font-size="11" fill="#333" text-anchor="middle" textLength="38.6" lengthAdjust="spacingAndGlyphs">Phrases</text>
<g fill="none" stroke="#333" stroke-width="1.4"><path d="M256.2 958.4 V954 H270.3 V958.4 M263.2 954 V968 M258.6 968 H267.6"/></g>
<text x="263" y="990" font-family="Liberation Sans" font-size="11" fill="#333" text-anchor="middle" textLength="20" lengthAdjust="spacingAndGlyphs">Text</text>
<g fill="none" stroke="#333" stroke-width="1.4" stroke-linejoin="round" stroke-linecap="round"><path d="M310.4 950.4 L302.4 964.2 H317.8 Z"/><path d="M314.6 958.4 A6.7 6.7 0 1 1 310.3 964.4"/></g>
<text x="312.5" y="990" font-family="Liberation Sans" font-size="11" fill="#333" text-anchor="middle" textLength="37" lengthAdjust="spacingAndGlyphs">Shapes</text>
<g fill="none" stroke="#333" stroke-width="1.4" stroke-linejoin="round" stroke-linecap="round"><path d="M355.2 955.2 V952.4 H369 V955.2 M362.1 959.4 V969.2 M356.3 963.6 L362.1 959 L367.9 963.6"/></g>
<text x="362" y="990" font-family="Liberation Sans" font-size="11" fill="#333" text-anchor="middle" textLength="36" lengthAdjust="spacingAndGlyphs">Upload</text>
<g fill="none" stroke="#333" stroke-width="1.3" stroke-linejoin="round"><path d="M692.1 952.6 L708.9 956.3 V965.4 L692.1 968.9 Z"/></g><g fill="#f9f9f9" stroke="#333" stroke-width="1.3"><circle cx="692.1" cy="952.6" r="2"/><circle cx="708.9" cy="956.3" r="2"/><circle cx="708.9" cy="965.4" r="2"/><circle cx="692.1" cy="968.9" r="2"/></g>
<text x="700.5" y="990" font-family="Liberation Sans" font-size="11" fill="#333" text-anchor="middle" textLength="37.4" lengthAdjust="spacingAndGlyphs">Actions</text>
<g fill="none" stroke="#39a882" stroke-width="1.5" stroke-linejoin="round" stroke-linecap="round"><path d="M751.6 953.6 H756.6 Q760.6 953.6 760.6 957.6 V967.4 Q760.6 971.4 756.6 971.4 H746.9 Q742.9 971.4 742.9 967.4 V962.1"/><path d="M740.2 954.6 Q739.3 953.5 740.4 952.4 L741.8 951 Q742.9 949.9 744 951 L751.6 958.6 L753.3 964.3 L747.6 962.2 Z M747.3 961.9 L751.4 957.8"/></g>
<text x="749.5" y="990" font-family="Liberation Sans" font-size="11" fill="#39a882" text-anchor="middle" textLength="19" lengthAdjust="spacingAndGlyphs">Edit</text>
<g fill="none" stroke="#333" stroke-width="1.4" stroke-linejoin="round" stroke-linecap="round"><path d="M792.4 956.1 A8.5 8.5 0 1 0 804.8 965.8"/><path d="M792.3 953.6 L794.9 955.9 L792.1 958.2"/><path d="M795.40 964.50 L795.54 962.35 L803.32 954.85 L805.33 956.93 L797.56 964.43 Z M802.97 954.49 L808.25 949.40 L810.95 952.20 L805.68 957.29 Z"/></g>
<text x="799.3" y="990" font-family="Liberation Sans" font-size="11" fill="#333" text-anchor="middle" textLength="24.6" lengthAdjust="spacingAndGlyphs">Sync</text>
<g fill="none" stroke="#39a882" stroke-width="1.5" stroke-linejoin="round" stroke-linecap="round"><path d="M848.7 951.7 L858.5 956.4 L848.7 961.2 L839.3 956.4 Z M839.3 961.3 L848.7 965.8 L858.5 961.3 M839.3 965.4 L848.7 970 L858.5 965.4"/></g>
<text x="848.4" y="990" font-family="Liberation Sans" font-size="11" fill="#39a882" text-anchor="middle" textLength="32" lengthAdjust="spacingAndGlyphs">Layers</text>
<g fill="none" stroke="#222" stroke-width="1.5" stroke-linejoin="round" stroke-linecap="round"><path d="M892.1 954 L888.8 957.3 L892.1 960.8 M888.8 957.3 H901.5 A5.1 5.1 0 0 1 901.5 967.5 H895.8"/></g>
<text x="898" y="990" font-family="Liberation Sans" font-size="11" fill="#222" text-anchor="middle" textLength="27.2" lengthAdjust="spacingAndGlyphs">Undo</text>
<g fill="none" stroke="#bdbdbd" stroke-width="1.5" stroke-linejoin="round" stroke-linecap="round"><path d="M954.2 954 L957.5 957.3 L954.2 960.8 M957.5 957.3 H944.8 A5.1 5.1 0 0 0 944.8 967.5 H950.5"/></g>
<text x="947.7" y="990" font-family="Liberation Sans" font-size="11" fill="#bdbdbd" text-anchor="middle" textLength="25.4" lengthAdjust="spacingAndGlyphs">Redo</text>
<g fill="none" stroke="#333" stroke-width="1.4" stroke-linejoin="round" stroke-linecap="round"><rect x="1275.6" y="955.3" width="21" height="15.2" rx="2.4"/><path d="M1281.2 955.3 V953.5 Q1281.2 951.6 1283.1 951.6 H1290 Q1291.9 951.6 1291.9 953.5 V955.3"/><circle cx="1286" cy="962.7" r="4.1"/></g><circle cx="1293" cy="958.9" r="1.1" fill="#333"/>
<text x="1286.1" y="990" font-family="Liberation Sans" font-size="11" fill="#333" text-anchor="middle" textLength="38.8" lengthAdjust="spacingAndGlyphs">Camera</text>
<g fill="none" stroke="#333" stroke-width="1.4" stroke-linejoin="round" stroke-linecap="round"><path d="M1343.40 961.00 L1343.40 961.14 L1343.40 961.28 L1343.39 961.41 L1343.38 961.55 L1343.37 961.69 L1343.36 961.83 L1343.34 961.96 L1343.32 962.10 L1343.30 962.24 L1343.30 962.37 L1343.39 962.53 L1343.57 962.72 L1343.83 962.92 L1344.14 963.15 L1344.46 963.40 L1344.77 963.66 L1345.01 963.91 L1345.17 964.14 L1345.23 964.35 L1345.18 964.52 L1345.12 964.69 L1345.05 964.86 L1344.98 965.02 L1344.91 965.19 L1344.83 965.35 L1344.76 965.52 L1344.68 965.68 L1344.59 965.84 L1344.51 965.99 L1344.42 966.15 L1344.33 966.30 L1344.23 966.46 L1344.14 966.61 L1344.04 966.76 L1343.94 966.91 L1343.83 967.05 L1343.73 967.20 L1343.62 967.34 L1343.50 967.48 L1343.39 967.62 L1343.26 967.75 L1343.06 967.81 L1342.77 967.78 L1342.43 967.70 L1342.06 967.56 L1341.69 967.41 L1341.33 967.25 L1341.02 967.13 L1340.77 967.06 L1340.59 967.07 L1340.47 967.14 L1340.36 967.23 L1340.25 967.31 L1340.14 967.39 L1340.03 967.47 L1339.92 967.55 L1339.80 967.63 L1339.69 967.70 L1339.57 967.77 L1339.45 967.84 L1339.33 967.91 L1339.21 967.98 L1339.09 968.04 L1338.96 968.10 L1338.84 968.16 L1338.71 968.22 L1338.59 968.27 L1338.46 968.32 L1338.33 968.38 L1338.21 968.44 L1338.12 968.60 L1338.05 968.85 L1338.00 969.18 L1337.95 969.56 L1337.90 969.96 L1337.83 970.35 L1337.74 970.69 L1337.61 970.95 L1337.46 971.10 L1337.29 971.14 L1337.11 971.17 L1336.93 971.20 L1336.76 971.22 L1336.58 971.24 L1336.40 971.26 L1336.22 971.27 L1336.04 971.29 L1335.86 971.29 L1335.68 971.30 L1335.50 971.30 L1335.32 971.30 L1335.14 971.29 L1334.96 971.29 L1334.78 971.27 L1334.60 971.26 L1334.42 971.24 L1334.24 971.22 L1334.07 971.20 L1333.89 971.17 L1333.71 971.14 L1333.54 971.10 L1333.39 970.95 L1333.26 970.69 L1333.17 970.35 L1333.10 969.96 L1333.05 969.56 L1333.00 969.18 L1332.95 968.85 L1332.88 968.60 L1332.79 968.44 L1332.67 968.38 L1332.54 968.32 L1332.41 968.27 L1332.29 968.22 L1332.16 968.16 L1332.04 968.10 L1331.91 968.04 L1331.79 967.98 L1331.67 967.91 L1331.55 967.84 L1331.43 967.77 L1331.31 967.70 L1331.20 967.63 L1331.08 967.55 L1330.97 967.47 L1330.86 967.39 L1330.75 967.31 L1330.64 967.23 L1330.53 967.14 L1330.41 967.07 L1330.23 967.06 L1329.98 967.13 L1329.67 967.25 L1329.31 967.41 L1328.94 967.56 L1328.57 967.70 L1328.23 967.78 L1327.94 967.81 L1327.74 967.75 L1327.61 967.62 L1327.50 967.48 L1327.38 967.34 L1327.27 967.20 L1327.17 967.05 L1327.06 966.91 L1326.96 966.76 L1326.86 966.61 L1326.77 966.46 L1326.67 966.30 L1326.58 966.15 L1326.49 965.99 L1326.41 965.84 L1326.32 965.68 L1326.24 965.52 L1326.17 965.35 L1326.09 965.19 L1326.02 965.02 L1325.95 964.86 L1325.88 964.69 L1325.82 964.52 L1325.77 964.35 L1325.83 964.14 L1325.99 963.91 L1326.23 963.66 L1326.54 963.40 L1326.86 963.15 L1327.17 962.92 L1327.43 962.72 L1327.61 962.53 L1327.70 962.37 L1327.70 962.24 L1327.68 962.10 L1327.66 961.96 L1327.64 961.83 L1327.63 961.69 L1327.62 961.55 L1327.61 961.41 L1327.60 961.28 L1327.60 961.14 L1327.60 961.00 L1327.60 960.86 L1327.60 960.72 L1327.61 960.59 L1327.62 960.45 L1327.63 960.31 L1327.64 960.17 L1327.66 960.04 L1327.68 959.90 L1327.70 959.76 L1327.70 959.63 L1327.61 959.47 L1327.43 959.28 L1327.17 959.08 L1326.86 958.85 L1326.54 958.60 L1326.23 958.34 L1325.99 958.09 L1325.83 957.86 L1325.77 957.65 L1325.82 957.48 L1325.88 957.31 L1325.95 957.14 L1326.02 956.98 L1326.09 956.81 L1326.17 956.65 L1326.24 956.48 L1326.32 956.32 L1326.41 956.16 L1326.49 956.01 L1326.58 955.85 L1326.67 955.70 L1326.77 955.54 L1326.86 955.39 L1326.96 955.24 L1327.06 955.09 L1327.17 954.95 L1327.27 954.80 L1327.38 954.66 L1327.50 954.52 L1327.61 954.38 L1327.74 954.25 L1327.94 954.19 L1328.23 954.22 L1328.57 954.30 L1328.94 954.44 L1329.31 954.59 L1329.67 954.75 L1329.98 954.87 L1330.23 954.94 L1330.41 954.93 L1330.53 954.86 L1330.64 954.77 L1330.75 954.69 L1330.86 954.61 L1330.97 954.53 L1331.08 954.45 L1331.20 954.37 L1331.31 954.30 L1331.43 954.23 L1331.55 954.16 L1331.67 954.09 L1331.79 954.02 L1331.91 953.96 L1332.04 953.90 L1332.16 953.84 L1332.29 953.78 L1332.41 953.73 L1332.54 953.68 L1332.67 953.62 L1332.79 953.56 L1332.88 953.40 L1332.95 953.15 L1333.00 952.82 L1333.05 952.44 L1333.10 952.04 L1333.17 951.65 L1333.26 951.31 L1333.39 951.05 L1333.54 950.90 L1333.71 950.86 L1333.89 950.83 L1334.07 950.80 L1334.24 950.78 L1334.42 950.76 L1334.60 950.74 L1334.78 950.73 L1334.96 950.71 L1335.14 950.71 L1335.32 950.70 L1335.50 950.70 L1335.68 950.70 L1335.86 950.71 L1336.04 950.71 L1336.22 950.73 L1336.40 950.74 L1336.58 950.76 L1336.76 950.78 L1336.93 950.80 L1337.11 950.83 L1337.29 950.86 L1337.46 950.90 L1337.61 951.05 L1337.74 951.31 L1337.83 951.65 L1337.90 952.04 L1337.95 952.44 L1338.00 952.82 L1338.05 953.15 L1338.12 953.40 L1338.21 953.56 L1338.33 953.62 L1338.46 953.68 L1338.59 953.73 L1338.71 953.78 L1338.84 953.84 L1338.96 953.90 L1339.09 953.96 L1339.21 954.02 L1339.33 954.09 L1339.45 954.16 L1339.57 954.23 L1339.69 954.30 L1339.80 954.37 L1339.92 954.45 L1340.03 954.53 L1340.14 954.61 L1340.25 954.69 L1340.36 954.77 L1340.47 954.86 L1340.59 954.93 L1340.77 954.94 L1341.02 954.87 L1341.33 954.75 L1341.69 954.59 L1342.06 954.44 L1342.43 954.30 L1342.77 954.22 L1343.06 954.19 L1343.26 954.25 L1343.39 954.38 L1343.50 954.52 L1343.62 954.66 L1343.73 954.80 L1343.83 954.95 L1343.94 955.09 L1344.04 955.24 L1344.14 955.39 L1344.23 955.54 L1344.33 955.70 L1344.42 955.85 L1344.51 956.01 L1344.59 956.16 L1344.68 956.32 L1344.76 956.48 L1344.83 956.65 L1344.91 956.81 L1344.98 956.98 L1345.05 957.14 L1345.12 957.31 L1345.18 957.48 L1345.23 957.65 L1345.17 957.86 L1345.01 958.09 L1344.77 958.34 L1344.46 958.60 L1344.14 958.85 L1343.83 959.08 L1343.57 959.28 L1343.39 959.47 L1343.30 959.63 L1343.30 959.76 L1343.32 959.90 L1343.34 960.04 L1343.36 960.17 L1343.37 960.31 L1343.38 960.45 L1343.39 960.59 L1343.40 960.72 L1343.40 960.86 Z"/><circle cx="1335.5" cy="961" r="3.6"/></g>
<text x="1335.7" y="990" font-family="Liberation Sans" font-size="11" fill="#333" text-anchor="middle" textLength="41.7" lengthAdjust="spacingAndGlyphs">Settings</text>

</svg>
</body></html>
